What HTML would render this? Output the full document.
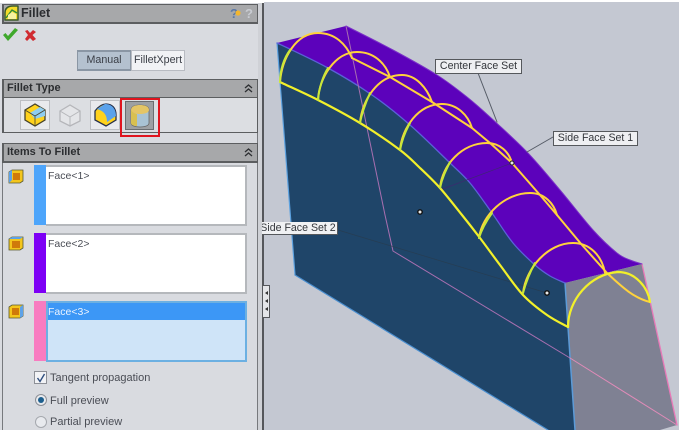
<!DOCTYPE html>
<html><head><meta charset="utf-8">
<style>
html,body{margin:0;padding:0;background:#fff}
#r{position:relative;width:679px;height:430px;overflow:hidden;background:#fff;font-family:"Liberation Sans",sans-serif;color:#3c3f46;filter:blur(.35px)}
#r div{position:absolute;box-sizing:border-box}
.hd{left:2px;width:256px;height:20px;background:#a7a8aa;border:1px solid #5c5e60;border-width:1px 1px 2px 2px;font:bold 11px/17px "Liberation Sans",sans-serif;color:#2b2d30;padding-left:3px}
.t{font-size:11px;line-height:14px;white-space:nowrap;color:#4a4d55}
.lst{left:46px;width:201px;height:61px;background:#fff;border:2px solid #b5b8bc;border-left:0}
.st{left:34px;width:12px;height:60px}
.lab{background:#eeeff2;border:1px solid #55585c;font-size:10.6px;line-height:13px;color:#33363b;text-align:center;white-space:nowrap;overflow:hidden}
.chev{position:absolute;left:243px}
</style></head><body><div id="r">
<div style="left:0;top:3px;width:262px;height:427px;background:#d9dbe0"></div>
<div style="left:262px;top:3px;width:2px;height:427px;background:#55575b"></div>
<div style="left:264px;top:2px;width:415px;height:428px;background:#c4c8d2"></div>
<div style="left:258px;top:3px;width:4px;height:427px;background:#cfd1d6"></div>
<div style="left:257px;top:132px;width:1px;height:298px;background:#77797d"></div>
<div style="left:2px;top:160px;width:1px;height:270px;background:#77797d"></div>

<svg style="position:absolute;left:264px;top:0" width="415" height="430" viewBox="264 0 415 430" stroke-linejoin="round" stroke-linecap="round">
<path d="M277 43 295 275 548 430H575L565 283 450 130 346 40Z" fill="#1f4569"/>
<path d="M277 43 346 26C353.800 30 377.800 41.800 393 50C408.200 58.200 424.700 67.200 437 75C449.300 82.800 458.200 90 467 97C475.800 104 480 107.800 490 117C500 126.200 515.300 139.800 527 152C538.700 164.200 549 177 560 190C571 203 583.500 219.500 593 230C602.500 240.500 610.800 248 617 253C623.200 258 625.800 258.200 630 260C634.200 261.800 640 263.300 642 264L565 283C562.500 281.800 555 279 550 276C545 273 541.200 270.500 535 265C528.800 259.500 520.200 251.700 513 243C505.800 234.300 499.200 223 492 213C484.800 203 477 191.300 470 183C463 174.700 460 172.700 450 163C440 153.300 423 136.300 410 125C397 113.700 385.700 104.500 372 95C358.300 85.500 343.800 76.700 328 68C312.200 59.300 285.500 47 277 43Z" fill="#5c02bb"/>
<path d="M565 283 642 264 677 425 660 430H575Z" fill="#7f8193"/>
<path d="M277 43 295 275" stroke="#5da2e0" stroke-width="1.200" fill="none"/>
<path d="M295 275 548 430" stroke="#4a8fd0" stroke-width="1.200" fill="none"/>
<path d="M565 283 575 430" stroke="#5c9bd8" stroke-width="1.500" fill="none"/>
<path d="M277 43C285.500 47 312.200 59.300 328 68C343.800 76.700 358.300 85.500 372 95C385.700 104.500 397 113.700 410 125C423 136.300 440 153.300 450 163C460 172.700 463 174.700 470 183C477 191.300 484.800 203 492 213C499.200 223 505.800 234.300 513 243C520.200 251.700 528.800 259.500 535 265C541.200 270.500 545 273 550 276C555 279 562.500 281.800 565 283" stroke="#5a62d8" stroke-width="1.300" fill="none"/>
<path d="M346 26 385 215 393 251 570 358" stroke="#a86fb0" stroke-width="1" fill="none"/>
<path d="M570 358 677 425" stroke="#e08bb8" stroke-width="1" fill="none"/>
<path d="M642 264 677 425" stroke="#e879b8" stroke-width="1.300" fill="none"/>
<path d="M346 26C353.800 30 377.800 41.800 393 50C408.200 58.200 424.700 67.200 437 75C449.300 82.800 458.200 90 467 97C475.800 104 480 107.800 490 117C500 126.200 515.300 139.800 527 152C538.700 164.200 549 177 560 190C571 203 583.500 219.500 593 230C602.500 240.500 610.800 248 617 253C623.200 258 625.800 258.200 630 260C634.200 261.800 640 263.300 642 264" stroke="#7a30c8" stroke-width="1" fill="none"/>
<path d="M338 230 547 293" stroke="#2a3a4a" stroke-width=".7" fill="none" opacity=".7"/>
<path d="M440 190 512 163" stroke="#3d2a70" stroke-width=".7" fill="none"/>
<path d="M478 73 497 122 M553 137 527 152" stroke="#555b66" stroke-width="1" fill="none"/>
<g fill="none" stroke="#ffd23c" stroke-width="2">
<path d="M280 82C282 58 296 33 318 33 335 33 346 44 352 58"/>
<path d="M318 100C319 78 335 52 357 52 373 52 385 62 390 77"/>
<path d="M360 123C362 100 378 75 402 75 416 75 427 88 432 102"/>
<path d="M400 150C402 128 418 104 442 104 457 104 468 115 472 128"/>
<path d="M440 188C442 165 462 143 487 143 500 143 509 152 512 163"/>
<path d="M479 238C482 215 505 193 530 193 545 193 554 204 557 215"/>
<path d="M523 293C526 268 548 243 573 243 590 243 602 256 605 273"/>
<path d="M352 58 390 77 432 102 472 128 490 143 512 163 540 195 557 215 582 245 607 273C620 285 633 298 650 302"/>
</g>
<path d="M280 82C286 85 304.700 93.200 318 100C331.300 106.800 346.300 114.700 360 123C373.700 131.300 390 142.500 400 150C410 157.500 413.300 161.700 420 168C426.700 174.300 433 180.200 440 188C447 195.800 455.300 206.700 462 215C468.700 223.300 473.700 229.700 480 238C486.300 246.300 492.800 255.500 500 265C507.200 274.500 515.200 286.700 523 295C530.800 303.300 539.500 309.700 547 315C554.500 320.300 564.500 325 568 327" fill="none" stroke="#f2f02a" stroke-width="2.200"/>
<path d="M280 82C280 70 284 58 290 50M318 100C319 88 323 76 328 68M360 123C362 112 366 102 370 93M400 150C402 140 406 130 410 123M440 188C442 178 446 170 450 162M479 238C482 228 487 220 492 213M523 293C526 282 530 272 535 263" fill="none" stroke="#c8e83a" stroke-width="2"/>
<path d="M568 327C568 300 590 274 618 272 636 272 648 288 650 302" fill="none" stroke="#f2f02a" stroke-width="2.200"/>
<circle cx="420" cy="212" r="2.200" fill="#e8e8e8" stroke="#111" stroke-width="1.400"/>
<circle cx="547" cy="293" r="2.200" fill="#e8e8e8" stroke="#111" stroke-width="1.400"/>
<circle cx="512" cy="163" r="2" fill="#e8e8e8" stroke="#222" stroke-width="1"/>
</svg>

<div class="lab" style="left:435px;top:59px;width:87px;height:15px">Center Face Set</div>
<div class="lab" style="left:553px;top:131px;width:85px;height:15px">Side Face Set 1</div>
<div class="lab" style="left:262px;top:222px;width:76px;height:13px;border-width:0 1px 1px 0;line-height:13px;background:#f0f1f3;text-indent:-3px">Side Face Set 2</div>

<div style="left:263px;top:285px;width:7px;height:33px;background:#e4e5e8;border:1px solid #55575b;border-left:0"></div>
<svg style="position:absolute;left:264px;top:290px" width="5" height="24"><path d="M1 3 4 1V5ZM1 11 4 9V13ZM1 19 4 17V21Z" fill="#333"/></svg>

<div class="hd" style="top:4px;font-size:12.500px;padding-left:17px;line-height:17px">Fillet</div>
<svg style="position:absolute;left:3px;top:5px" width="17" height="17" viewBox="0 0 17 17"><path d="M2 15V8C2 3 5 1 10 1H15V15Z" fill="#f4dc2a" stroke="#3d5a2c" stroke-width="1.500" stroke-linejoin="round"/><path d="M3 13 9 5 14 8" fill="none" stroke="#2f8a3a" stroke-width="1.400"/><path d="M5 14V10L9 7 13 9V14Z" fill="#f8f2a0"/></svg>
<svg style="position:absolute;left:227px;top:6px" width="28" height="15" viewBox="0 0 28 15"><text x="3" y="12" font-family="Liberation Sans" font-weight="bold" font-size="13" fill="#5a79a8">?</text><circle cx="11" cy="7" r="2.600" fill="#f3b62f"/><text x="18" y="12" font-family="Liberation Sans" font-weight="bold" font-size="13" fill="#c9ccd2">?</text></svg>

<svg style="position:absolute;left:2px;top:27px" width="36" height="16" viewBox="0 0 36 16"><path d="M1 8 6 14 16 3 13 1 6 9 3.500 6Z" fill="#3fa82c"/><path d="M23 4 25.500 3 28 6 31 3 34 5 30.500 8 34 12 31 14 28 11 25 14 23 12 26 8Z" fill="#d02a30"/></svg>

<div style="left:77px;top:50px;width:54px;height:21px;background:#b4c1cf;border:1px solid #8a96a4;border-width:2px 1px 2px 1px;font-size:10.700px;line-height:17px;text-align:center;color:#3a3e46">Manual</div>
<div style="left:131px;top:50px;width:54px;height:21px;background:#f1f2f5;border:1px solid #b8bbc2;font-size:10.700px;line-height:19px;text-align:center;color:#3a3e46;white-space:nowrap">FilletXpert</div>

<div class="hd" style="top:79px">Fillet Type</div>
<div style="left:2px;top:98px;width:256px;height:35px;border:1px solid #5c5e60;border-width:0 1px 1px 2px;background:#dcdee2"></div>
<svg class="chev" style="top:83px" width="11" height="11"><path d="M2 5 5.500 2 9 5M2 9 5.500 6 9 9" fill="none" stroke="#2d2f32" stroke-width="1.300"/></svg>

<div style="left:20px;top:100px;width:30px;height:30px;background:#e9eaed;border:1px solid #bdbfc3"></div>
<svg style="position:absolute;left:22px;top:102px" width="26" height="26" viewBox="0 0 26 26"><path d="M3 8 13 2 23 8V18L13 24 3 18Z" fill="#ffd21c" stroke="#47432a" stroke-width="1.300"/><path d="M8 11 18 5 23 8V14L13 17Z" fill="#8fcdf0"/><path d="M3 8 13 14V24M13 14 23 8" fill="none" stroke="#47432a" stroke-width=".8"/></svg>
<svg style="position:absolute;left:57px;top:102px" width="26" height="26" viewBox="0 0 26 26"><path d="M3 9 13 3 23 9V19L13 24 3 19Z" fill="#e4e5e8" stroke="#b5b6ba" stroke-width="1.300"/><path d="M3 9 13 15V24M13 15 23 9" fill="none" stroke="#b5b6ba"/></svg>
<div style="left:90px;top:100px;width:30px;height:30px;background:#e9eaed;border:1px solid #bdbfc3"></div>
<svg style="position:absolute;left:92px;top:102px" width="26" height="26" viewBox="0 0 26 26"><path d="M3 9C6 5 10 2 14 2 20 2 24 6 24 13V18L14 24 3 18Z" fill="#ffd21c" stroke="#27304a" stroke-width="1.300"/><path d="M5 7 13 2C19 2 24 6 24 14L15 20C15 13 12 9 5 7Z" fill="#5aa2ec"/></svg>
<div style="left:125px;top:101px;width:29px;height:29px;background:#9da0a3;border:1px solid #6a6d70"></div>
<svg style="position:absolute;left:128px;top:103px" width="24" height="26" viewBox="0 0 24 26"><path d="M3 7C3 3 8 2 12 2S21 3 21 7V20C21 23 16 24 12 24S3 23 3 20Z" fill="#a9c3d4" stroke="#666" stroke-width=".8"/><path d="M3 7C3 3 8 2 12 2S21 3 21 7C21 10 16 11 12 11S3 10 3 7Z" fill="#e4c566"/><path d="M3 7C5 10 8 11 9 11V23C6 23 3 22 3 20Z" fill="#d8c050"/></svg>
<div style="left:120px;top:98px;width:40px;height:39px;border:2px solid #e0141e"></div>

<div class="hd" style="top:143px">Items To Fillet</div>
<svg class="chev" style="top:147px" width="11" height="11"><path d="M2 5 5.500 2 9 5M2 9 5.500 6 9 9" fill="none" stroke="#2d2f32" stroke-width="1.300"/></svg>

<svg style="position:absolute;left:8px;top:169px" width="16" height="15" viewBox="0 0 16 15"><path d="M1 3 4 1H15V12L12 14H1Z" fill="#f4c61c" stroke="#5a5a30" stroke-width=".8"/><path d="M1 3 4 1V11L1 14Z" fill="#5da2e8"/><rect x="5" y="4" width="7" height="7" fill="#d07a0a"/></svg>
<svg style="position:absolute;left:8px;top:236px" width="16" height="15" viewBox="0 0 16 15"><path d="M1 3 4 1H15V12L12 14H1Z" fill="#f4c61c" stroke="#5a5a30" stroke-width=".8"/><path d="M1 3 4 1H15L12 3H1Z" fill="#5da2e8"/><rect x="4" y="5" width="8" height="7" fill="#d07a0a"/></svg>
<svg style="position:absolute;left:8px;top:304px" width="16" height="15" viewBox="0 0 16 15"><path d="M1 3 4 1H15V12L12 14H1Z" fill="#f4c61c" stroke="#5a5a30" stroke-width=".8"/><path d="M12 3 15 1V12L12 14Z" fill="#5da2e8"/><rect x="4" y="4" width="7" height="7" fill="#d07a0a"/></svg>

<div class="st" style="top:165px;background:#4da5fb"></div>
<div class="lst" style="top:165px"></div>
<div class="t" style="left:48px;top:169px;font-size:10.500px">Face&lt;1&gt;</div>
<div class="st" style="top:233px;background:#7d00f5"></div>
<div class="lst" style="top:233px"></div>
<div class="t" style="left:48px;top:237px;font-size:10.500px">Face&lt;2&gt;</div>
<div class="st" style="top:301px;background:#f87cc0"></div>
<div class="lst" style="top:301px;background:#cfe4f8;border:2px solid #6cb0e2"></div>
<div style="left:48px;top:303px;width:197px;height:17px;background:#3c97f6"></div>
<div class="t" style="left:48px;top:305px;color:#eaf3ff;font-size:10.500px">Face&lt;3&gt;</div>

<div style="left:34px;top:371px;width:13px;height:13px;background:#f2f3f6;border:1px solid #8d9097"></div>
<svg style="position:absolute;left:35px;top:372px" width="12" height="12"><path d="M2.500 6 5 9.500 9.500 2" fill="none" stroke="#2f4f80" stroke-width="1.400"/></svg>
<div class="t" style="left:50px;top:371px">Tangent propagation</div>
<div style="left:35px;top:394px;width:12px;height:12px;border-radius:50%;background:#e8eaee;border:1px solid #8d9097"></div>
<div style="left:38px;top:397px;width:6px;height:6px;border-radius:50%;background:#1d5f8e"></div>
<div class="t" style="left:50px;top:394px">Full preview</div>
<div style="left:35px;top:416px;width:12px;height:12px;border-radius:50%;background:#e8eaee;border:1px solid #a5a8ae"></div>
<div class="t" style="left:50px;top:415px">Partial preview</div>
</div></body></html>
